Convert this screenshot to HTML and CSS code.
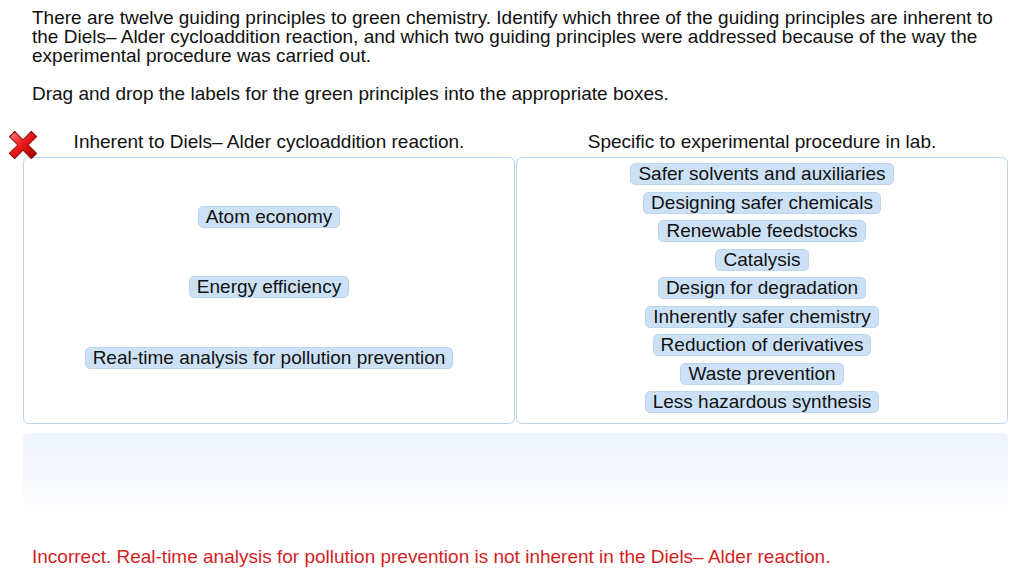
FILE: index.html
```html
<!DOCTYPE html>
<html>
<head>
<meta charset="utf-8">
<link rel="stylesheet" href="styles.css">
</head>
<body>
<div class="page">
  <p class="intro">There are twelve guiding principles to green chemistry. Identify which three of the guiding principles are inherent to the Diels– Alder cycloaddition reaction, and which two guiding principles were addressed because of the way the experimental procedure was carried out.</p>
  <p class="instr">Drag and drop the labels for the green principles into the appropriate boxes.</p>

  <div class="task">
    <svg class="mark" width="28" height="28" viewBox="0 0 28 28" aria-hidden="true">
      <defs>
        <linearGradient id="xg" x1="0" y1="0" x2="1" y2="0">
          <stop offset="0" stop-color="#ff7070"/>
          <stop offset="0.45" stop-color="#ea1a1a"/>
          <stop offset="1" stop-color="#a80000"/>
        </linearGradient>
      </defs>
      <g transform="rotate(45 14 14)">
        <path d="M10.3 -1.5 L17.7 -1.5 L17.7 10.3 L29.5 10.3 L29.5 17.7 L17.7 17.7 L17.7 29.5 L10.3 29.5 L10.3 17.7 L-1.5 17.7 L-1.5 10.3 L10.3 10.3 Z" fill="url(#xg)" stroke="#8c0808" stroke-width="1" stroke-linejoin="round"/>
      </g>
    </svg>
    <div class="cols">
      <div class="col">
        <h3 class="col-title">Inherent to Diels– Alder cycloaddition reaction.</h3>
        <div class="box box-left">
          <span class="chip">Atom economy</span>
          <span class="chip">Energy efficiency</span>
          <span class="chip">Real-time analysis for pollution prevention</span>
        </div>
      </div>
      <div class="col">
        <h3 class="col-title">Specific to experimental procedure in lab.</h3>
        <div class="box box-right">
          <span class="chip">Safer solvents and auxiliaries</span>
          <span class="chip">Designing safer chemicals</span>
          <span class="chip">Renewable feedstocks</span>
          <span class="chip">Catalysis</span>
          <span class="chip">Design for degradation</span>
          <span class="chip">Inherently safer chemistry</span>
          <span class="chip">Reduction of derivatives</span>
          <span class="chip">Waste prevention</span>
          <span class="chip">Less hazardous synthesis</span>
        </div>
      </div>
    </div>
    <div class="pool"></div>
  </div>

  <p class="feedback">Incorrect. Real-time analysis for pollution prevention is not inherent in the Diels– Alder reaction.</p>
</div>
</body>
</html>
```

FILE: styles.css
```css
html, body {
  margin: 0;
  padding: 0;
  background: #ffffff;
}

body {
  font-family: "Liberation Sans", Arial, sans-serif;
  color: #111111;
  font-size: 19px;
}

.page {
  padding: 8px 0 0 32px;
}

.intro {
  margin: 0;
  width: 968px;
  line-height: 19px;
}

.instr {
  margin: 19px 0 0 0;
  line-height: 20px;
}

.task {
  position: relative;
  margin: 28px 0 0 -9px;
  width: 985px;
}

.mark {
  position: absolute;
  left: -14px;
  top: -1px;
}

.cols {
  display: flex;
  gap: 1px;
}

.col {
  width: 492px;
  display: flex;
  flex-direction: column;
}

.col-title {
  margin: 0 0 5px 0;
  font-size: 19px;
  font-weight: normal;
  text-align: center;
  line-height: 20px;
}

.box {
  box-sizing: border-box;
  height: 267px;
  border: 1px solid #b9d4ee;
  border-radius: 6px;
  display: flex;
  flex-direction: column;
  align-items: center;
}

.box-left {
  padding-top: 47.5px;
  gap: 48.5px;
}

.box-right {
  padding-top: 5px;
  gap: 6.5px;
}

.chip {
  display: inline-block;
  box-sizing: border-box;
  height: 22px;
  line-height: 20px;
  padding: 0 7px;
  background: #cde1f6;
  border: 1px solid #bcd6f0;
  border-radius: 5px;
  color: #111111;
  white-space: nowrap;
}

.pool {
  margin-top: 9px;
  height: 80px;
  border-radius: 5px;
  background: linear-gradient(to bottom, #eef4fb 0%, #f6f9fd 60%, #ffffff 100%);
}

.feedback {
  margin: 34px 0 0 0;
  color: #d41f1f;
  line-height: 20px;
}
```
